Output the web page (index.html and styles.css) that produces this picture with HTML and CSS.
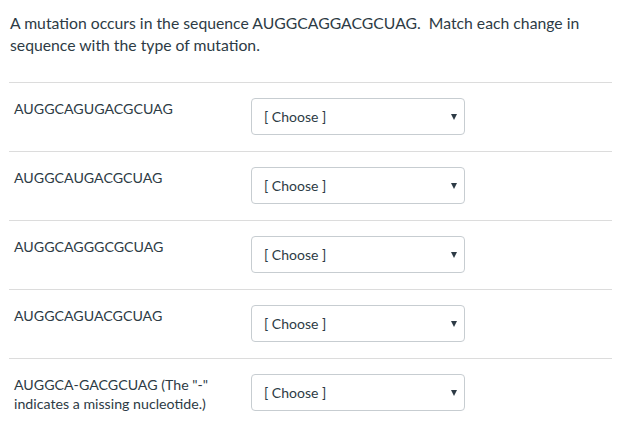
FILE: index.html
```html
<!DOCTYPE html>
<html>
<head>
<meta charset="utf-8">
<link rel="stylesheet" href="styles.css">
</head>
<body>
<div class="question">
  <p class="prompt">A mutation occurs in the sequence AUGGCAGGACGCUAG.&nbsp; Match each change in sequence with the type of mutation.</p>
  <div class="answers">
    <div class="row">
      <div class="label">AUGGCAGUGACGCUAG</div>
      <div class="select-wrap"><select class="select"><option>[ Choose ]</option></select><span class="arrow"></span></div>
    </div>
    <div class="row">
      <div class="label">AUGGCAUGACGCUAG</div>
      <div class="select-wrap"><select class="select"><option>[ Choose ]</option></select><span class="arrow"></span></div>
    </div>
    <div class="row">
      <div class="label">AUGGCAGGGCGCUAG</div>
      <div class="select-wrap"><select class="select"><option>[ Choose ]</option></select><span class="arrow"></span></div>
    </div>
    <div class="row">
      <div class="label">AUGGCAGUACGCUAG</div>
      <div class="select-wrap"><select class="select"><option>[ Choose ]</option></select><span class="arrow"></span></div>
    </div>
    <div class="row">
      <div class="label">AUGGCA-GACGCUAG (The "-" indicates a missing nucleotide.)</div>
      <div class="select-wrap"><select class="select"><option>[ Choose ]</option></select><span class="arrow"></span></div>
    </div>
  </div>
</div>
</body>
</html>
```

FILE: styles.css
```css
html, body {
  margin: 0;
  padding: 0;
  background: #ffffff;
}
body {
  font-family: Lato, "Open Sans", sans-serif;
  color: #2d3b45;
}
.question {
  margin-left: 9px;
  width: 603px;
}
.prompt {
  margin: 0;
  padding: 12px 0 0 1px;
  font-size: 15.75px;
  line-height: 22px;
  margin-bottom: 26px;
}
.row {
  display: flex;
  align-items: flex-start;
  border-top: 1px solid #dcdcdc;
  padding: 15px 0 16px 5px;
}
.label {
  flex: 0 0 227px;
  margin-right: 10px;
  padding-top: 1px;
  font-size: 14.2px;
  line-height: 19px;
}
.select-wrap {
  position: relative;
  width: 214px;
  height: 37px;
}
.select {
  appearance: none;
  -webkit-appearance: none;
  box-sizing: border-box;
  width: 214px;
  height: 37px;
  margin: 0;
  border: 1px solid #c7cdd1;
  border-radius: 4px;
  background: #ffffff;
  padding: 0 0 0 12px;
  font-family: Lato, "Open Sans", sans-serif;
  font-size: 14px;
  color: #2d3b45;
}
.arrow {
  position: absolute;
  right: 8px;
  top: 16px;
  width: 0;
  height: 0;
  border-left: 3.5px solid transparent;
  border-right: 3.5px solid transparent;
  border-top: 6px solid #2d3b45;
}
```
